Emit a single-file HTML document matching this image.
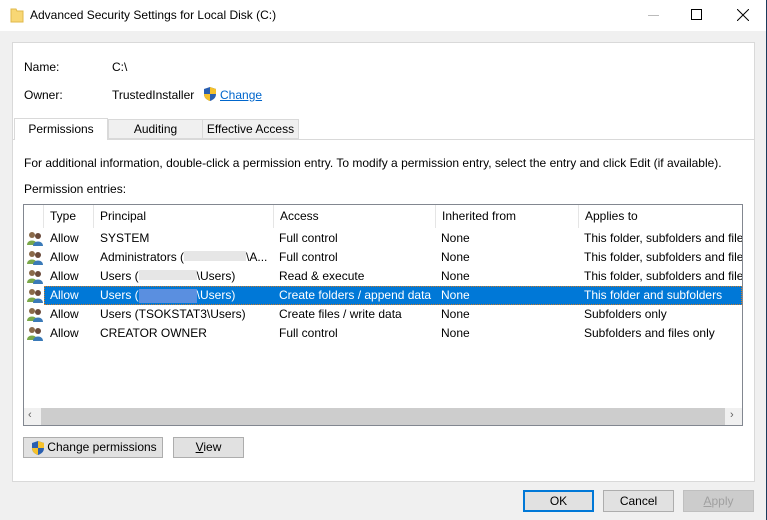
<!DOCTYPE html>
<html><head><style>
*{box-sizing:border-box;margin:0;padding:0}
body{width:767px;height:520px;background:#f0f0f0;font-family:"Liberation Sans",sans-serif;font-size:12px;color:#000;position:relative;overflow:hidden}
.abs{position:absolute}
.title{left:0;top:0;width:767px;height:31px;background:#fff}
.panel{left:12px;top:42px;width:743px;height:440px;background:#fff;border:1px solid #d9d9d9}
.btn{position:absolute;background:#e1e1e1;border:1px solid #adadad;text-align:center;line-height:19px;font-size:12px}
.list{left:23px;top:204px;width:720px;height:222px;border:1px solid #828790;background:#fff;overflow:hidden}
.hdr{position:absolute;top:0;height:23px;line-height:23px;border-right:1px solid #e5e5e5;padding-left:6px;color:#000}
.row{position:absolute;left:0;width:718px;height:19px;line-height:19px;white-space:nowrap}
.row span{position:absolute;top:0}
.sel{background:#0078d7;color:#fff;outline:1px dotted #c97a2a;outline-offset:-1px}
</style></head><body>
<div class="abs title"></div>
<div class="abs" style="right:0;top:0;width:1px;height:520px;background:#1a3b5c"></div>
<svg class="abs" style="left:10px;top:7px" width="14" height="16"><path d="M1 2h5l1 2h6v11H1z" fill="#f8d775" stroke="#e0b84a"/></svg>
<div class="abs" style="left:30px;top:8px;font-size:12px">Advanced Security Settings for Local Disk (C:)</div>
<div class="abs" style="left:648px;top:15px;width:11px;height:1px;background:#bbb"></div>
<div class="abs" style="left:691px;top:9px;width:11px;height:11px;border:1px solid #000"></div>
<svg class="abs" style="left:737px;top:9px" width="12" height="12"><path d="M0 0L12 12M12 0L0 12" stroke="#000" stroke-width="1"/></svg>
<div class="abs panel"></div>
<div class="abs" style="left:24px;top:60px">Name:</div>
<div class="abs" style="left:112px;top:60px">C:\</div>
<div class="abs" style="left:24px;top:88px">Owner:</div>
<div class="abs" style="left:112px;top:88px">TrustedInstaller</div>
<svg class="abs" style="left:203px;top:86px" width="14" height="16"><path d="M7 1L13 3V8C13 12 10 14 7 15C4 14 1 12 1 8V3Z" fill="#2a5fb0"/><path d="M7 1L13 3V8H7ZM7 8V15C4 14 1 12 1 8Z" fill="#f5c12c"/></svg>
<div class="abs" style="left:220px;top:88px;color:#0066cc;text-decoration:underline">Change</div>
<div class="abs" style="left:13px;top:139px;width:741px;height:1px;background:#d9d9d9"></div>
<div class="abs" style="left:14px;top:118px;width:94px;height:22px;background:#fff;border:1px solid #d9d9d9;border-bottom:none;text-align:center;line-height:21px">Permissions</div>
<div class="abs" style="left:108px;top:119px;width:95px;height:20px;background:#f0f0f0;border:1px solid #d9d9d9;text-align:center;line-height:19px">Auditing</div>
<div class="abs" style="left:202px;top:119px;width:97px;height:20px;background:#f0f0f0;border:1px solid #d9d9d9;text-align:center;line-height:19px">Effective Access</div>
<div class="abs" style="left:24px;top:156px">For additional information, double-click a permission entry. To modify a permission entry, select the entry and click Edit (if available).</div>
<div class="abs" style="left:24px;top:182px">Permission entries:</div>
<div class="abs list">
<div class="hdr" style="left:0;width:20px;padding:0"></div>
<div class="hdr" style="left:20px;width:50px">Type</div>
<div class="hdr" style="left:70px;width:180px">Principal</div>
<div class="hdr" style="left:250px;width:162px">Access</div>
<div class="hdr" style="left:412px;width:143px">Inherited from</div>
<div class="hdr" style="left:555px;width:170px">Applies to</div>
<div class="row" style="top:24px"><span style="left:26px">Allow</span><span style="left:76px">SYSTEM</span><span style="left:255px">Full control</span><span style="left:417px">None</span><span style="left:560px">This folder, subfolders and files</span></div>
<div class="row" style="top:43px"><span style="left:26px">Allow</span><span style="left:76px">Administrators (<span style="position:static;display:inline-block;width:62px;height:10px;background:#e6e6e6"></span>\A...</span><span style="left:255px">Full control</span><span style="left:417px">None</span><span style="left:560px">This folder, subfolders and files</span></div>
<div class="row" style="top:62px"><span style="left:26px">Allow</span><span style="left:76px">Users (<span style="position:static;display:inline-block;width:58px;height:10px;background:#e6e6e6"></span>\Users)</span><span style="left:255px">Read &amp; execute</span><span style="left:417px">None</span><span style="left:560px">This folder, subfolders and files</span></div>
<div class="row sel" style="top:81px;left:20px;width:698px"><span style="left:6px">Allow</span><span style="left:56px">Users (<span style="position:static;display:inline-block;width:58px;height:14px;background:#5a8fe0;vertical-align:middle"></span>\Users)</span><span style="left:235px">Create folders / append data</span><span style="left:397px">None</span><span style="left:540px">This folder and subfolders</span></div>
<div class="row" style="top:100px"><span style="left:26px">Allow</span><span style="left:76px">Users (TSOKSTAT3\Users)</span><span style="left:255px">Create files / write data</span><span style="left:417px">None</span><span style="left:560px">Subfolders only</span></div>
<div class="row" style="top:119px"><span style="left:26px">Allow</span><span style="left:76px">CREATOR OWNER</span><span style="left:255px">Full control</span><span style="left:417px">None</span><span style="left:560px">Subfolders and files only</span></div>
<svg style="position:absolute;left:3px;top:26px" width="17" height="130">
<g id="u"><circle cx="5" cy="4" r="3" fill="#8a6a4a"/><path d="M0 14C0 8 10 8 10 14Z" fill="#7aa84a"/><circle cx="11" cy="5" r="3" fill="#6a4a3a"/><path d="M6 15C6 9 16 9 16 15Z" fill="#3a7ab8"/></g>
<use href="#u" y="19"/><use href="#u" y="38"/><use href="#u" y="57"/><use href="#u" y="76"/><use href="#u" y="95"/>
</svg>
<div style="position:absolute;left:0;top:203px;width:718px;height:17px;background:#f0f0f0"></div>
<div style="position:absolute;left:17px;top:203px;width:684px;height:17px;background:#cdcdcd"></div>
<div style="position:absolute;left:4px;top:204px;font-size:11px;color:#606060">&#8249;</div>
<div style="position:absolute;left:706px;top:204px;font-size:11px;color:#606060">&#8250;</div>
</div>
<div class="btn" style="left:23px;top:437px;width:140px;height:21px"><svg style="position:absolute;left:7px;top:2px" width="14" height="16"><path d="M7 1L13 3V8C13 12 10 14 7 15C4 14 1 12 1 8V3Z" fill="#2a5fb0"/><path d="M7 1L13 3V8H7ZM7 8V15C4 14 1 12 1 8Z" fill="#f5c12c"/></svg><span style="padding-left:18px">Change permissions</span></div>
<div class="btn" style="left:173px;top:437px;width:71px;height:21px"><u>V</u>iew</div>
<div class="btn" style="left:523px;top:490px;width:71px;height:22px;border:2px solid #0078d7;line-height:18px">OK</div>
<div class="btn" style="left:603px;top:490px;width:71px;height:22px;line-height:20px">Cancel</div>
<div class="btn" style="left:683px;top:490px;width:71px;height:22px;line-height:20px;color:#a0a0a0;border-color:#bfbfbf;background:#ccc"><u>A</u>pply</div>
</body></html>
